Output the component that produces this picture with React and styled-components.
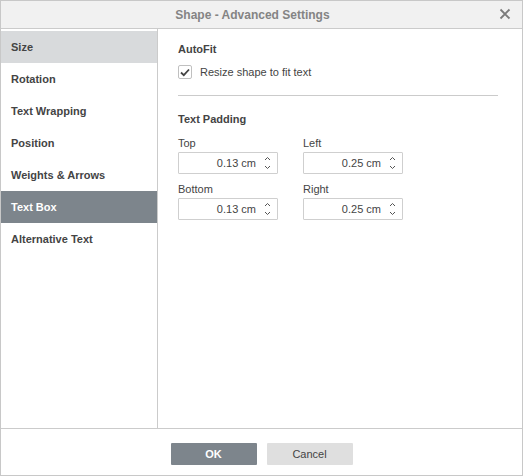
import React from 'react';
import styled, { createGlobalStyle } from 'styled-components';

const GlobalStyle = createGlobalStyle`
  html, body {
    margin: 0;
    padding: 0;
    background: #ffffff;
  }
  * {
    box-sizing: border-box;
  }
`;

const tabs = [
  'Size',
  'Rotation',
  'Text Wrapping',
  'Position',
  'Weights & Arrows',
  'Text Box',
  'Alternative Text',
];

function Spinner() {
  return (
    <SpinBox>
      <svg width="7" height="16" viewBox="0 0 7 16">
        <path d="M1 5 L3.5 2.5 L6 5" fill="none" stroke="#555" strokeWidth="1" />
        <path d="M1 11 L3.5 13.5 L6 11" fill="none" stroke="#555" strokeWidth="1" />
      </svg>
    </SpinBox>
  );
}

function Field({ label, value }) {
  return (
    <FieldCol>
      <FieldLabel>{label}</FieldLabel>
      <InputBox>
        <span>{value}</span>
        <Spinner />
      </InputBox>
    </FieldCol>
  );
}

export default function App() {
  return (
    <>
      <GlobalStyle />
      <Dialog>
        <Header>
          <Title>Shape - Advanced Settings</Title>
          <Close>
            <svg width="12" height="12" viewBox="0 0 12 12">
              <path d="M1.5 1.5 L10.5 10.5 M10.5 1.5 L1.5 10.5" stroke="#7b7b7b" strokeWidth="1.8" />
            </svg>
          </Close>
        </Header>
        <Body>
          <Sidebar>
            {tabs.map((t) => (
              <Tab key={t} $state={t === 'Text Box' ? 'active' : t === 'Size' ? 'hover' : ''}>
                {t}
              </Tab>
            ))}
          </Sidebar>
          <Content>
            <SectionTitle>AutoFit</SectionTitle>
            <CheckRow>
              <CheckBox>
                <svg width="10" height="9" viewBox="0 0 10 9">
                  <path d="M1 4.5 L3.8 7.2 L9 1.5" fill="none" stroke="#444" strokeWidth="1.8" />
                </svg>
              </CheckBox>
              <CheckLabel>Resize shape to fit text</CheckLabel>
            </CheckRow>
            <Separator />
            <SectionTitle $gap="15px">Text Padding</SectionTitle>
            <FieldGrid>
              <Field label="Top" value="0.13 cm" />
              <Field label="Left" value="0.25 cm" />
              <Field label="Bottom" value="0.13 cm" />
              <Field label="Right" value="0.25 cm" />
            </FieldGrid>
          </Content>
        </Body>
        <Footer>
          <Button $primary>OK</Button>
          <Button>Cancel</Button>
        </Footer>
      </Dialog>
    </>
  );
}

const Dialog = styled.div`
  width: 523px;
  height: 476px;
  border: 1px solid #c8c8c8;
  display: flex;
  flex-direction: column;
  font-family: Arial, 'Liberation Sans', sans-serif;
  font-size: 11px;
  color: #444444;
  background: #ffffff;
`;

const Header = styled.div`
  position: relative;
  height: 28px;
  flex: none;
  background: #f1f1f1;
  border-bottom: 1px solid #cbcbcb;
  display: flex;
  align-items: center;
  justify-content: center;
  padding-right: 18px;
`;

const Title = styled.div`
  font-size: 12px;
  font-weight: bold;
  color: #848484;
`;

const Close = styled.div`
  position: absolute;
  right: 10px;
  top: 6px;
  width: 14px;
  height: 14px;
  display: flex;
  align-items: center;
  justify-content: center;
`;

const Body = styled.div`
  flex: 1;
  display: flex;
  min-height: 0;
`;

const Sidebar = styled.div`
  width: 157px;
  flex: none;
  border-right: 1px solid #cbcbcb;
  padding-top: 2px;
  display: flex;
  flex-direction: column;
`;

const Tab = styled.div`
  height: 32px;
  line-height: 32px;
  padding-left: 10px;
  font-weight: bold;
  background: ${(p) => (p.$state === 'active' ? '#7d858c' : p.$state === 'hover' ? '#d8dadc' : 'transparent')};
  color: ${(p) => (p.$state === 'active' ? '#ffffff' : '#444444')};
`;

const Content = styled.div`
  flex: 1;
  padding: 12px 24px 0 20px;
`;

const SectionTitle = styled.div`
  font-weight: bold;
  line-height: 16px;
  margin-top: ${(p) => p.$gap || '0'};
`;

const CheckRow = styled.div`
  display: flex;
  align-items: center;
  margin-top: 8px;
  height: 14px;
`;

const CheckBox = styled.div`
  width: 14px;
  height: 14px;
  border: 1px solid #c0c0c0;
  border-radius: 2px;
  display: flex;
  align-items: center;
  justify-content: center;
`;

const CheckLabel = styled.span`
  margin-left: 8px;
  font-size: 11px;
`;

const Separator = styled.div`
  height: 1px;
  background: #cbcbcb;
  margin-top: 16px;
`;

const FieldGrid = styled.div`
  display: grid;
  grid-template-columns: 125px 100px;
  row-gap: 7px;
  margin-top: 8px;
`;

const FieldCol = styled.div`
  display: flex;
  flex-direction: column;
`;

const FieldLabel = styled.div`
  line-height: 16px;
  margin-bottom: 1px;
`;

const InputBox = styled.div`
  width: 100px;
  height: 22px;
  border: 1px solid #cfcfcf;
  border-radius: 1px;
  display: flex;
  align-items: center;
  justify-content: flex-end;
  padding-right: 5px;
  span {
    margin-right: 7px;
  }
`;

const SpinBox = styled.div`
  width: 9px;
  height: 16px;
  display: flex;
  align-items: center;
  justify-content: center;
`;

const Footer = styled.div`
  height: 47px;
  flex: none;
  border-top: 1px solid #cbcbcb;
  display: flex;
  justify-content: center;
  align-items: flex-start;
  padding-top: 14px;
  gap: 10px;
`;

const Button = styled.div`
  width: 86px;
  height: 22px;
  display: flex;
  align-items: center;
  justify-content: center;
  font-size: 11px;
  font-weight: ${(p) => (p.$primary ? 'bold' : 'normal')};
  background: ${(p) => (p.$primary ? '#7d858c' : '#dfdfdf')};
  color: ${(p) => (p.$primary ? '#ffffff' : '#444444')};
  border-radius: 1px;
`;
